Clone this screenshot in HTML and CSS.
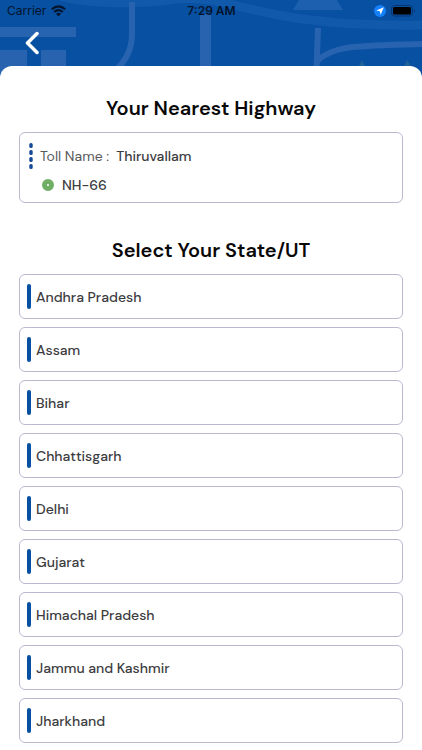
FILE: index.html
```html
<!DOCTYPE html>
<html lang="en">
<head>
<meta charset="utf-8">
<meta name="viewport" content="width=device-width, initial-scale=1">
<title>Select Your State/UT</title>
<link rel="stylesheet" href="styles.css">
</head>
<body>
<header class="header">
  <svg class="map" viewBox="0 0 422 82" preserveAspectRatio="xMidYMin slice" aria-hidden="true">
    <path d="M60 -4C90 5 145 4 176 -1C235 -6 260 28 422 25" fill="none" stroke="#1159aa" stroke-width="9"/>
    <path d="M299 0h38l6 10h-50z" fill="#1c60af"/>
    <g fill="#2863b0">
      <path d="M0 27h76v10H0zM0 50h27v32H0zM41 50h25v32H41zM200 14h11v68h-11z"/>
    </g>
    <path d="M132 2V34Q132 55 116 70M318 28L316 82M317 61C334 45 356 46 422 44" fill="none" stroke="#2863b0" stroke-width="6"/>
    <path d="M359 66l3-6 3 6zM404 66l3-6 4 6z" fill="#1d629b"/>
  </svg>
  <div class="status">
    <div class="status-left">
      <span>Carrier</span>
      <svg width="15" height="12" viewBox="0 0 15 12" aria-hidden="true">
        <path d="M.8 4.300Q7.500-1.700 14.200 4.300M3.200 7Q7.500 3.200 11.800 7" fill="none" stroke="#03142c" stroke-width="2.200"/>
        <path d="M5 8.800Q7.500 6.800 10 8.800L7.500 11.500z" fill="#03142c"/>
      </svg>
    </div>
    <time class="clock">7:29 AM</time>
    <div class="status-right">
      <svg width="12" height="12" viewBox="0 0 12 12" aria-hidden="true">
        <circle cx="6" cy="6" r="6" fill="#1580fb"/>
        <path d="M9.800 2.300L6.700 9.800 5.800 6.300 2.200 5.500z" fill="#fff"/>
      </svg>
      <svg width="25" height="12" viewBox="0 0 25 12" aria-hidden="true">
        <rect x=".5" y=".5" width="21" height="10.500" rx="3" fill="none" stroke="#07356f"/>
        <rect x="2" y="2" width="18" height="7.500" rx="1.500" fill="#000"/>
        <path d="M23 4q2 1.700 0 3.500z" fill="#07356f"/>
      </svg>
    </div>
  </div>
  <button class="back" type="button" aria-label="Back">
    <svg width="14" height="24" viewBox="0 0 14 24" aria-hidden="true">
      <path d="M12 2.500L2.500 12 12 21.500" fill="none" stroke="#fff" stroke-width="3.500" stroke-linecap="round" stroke-linejoin="round"/>
    </svg>
  </button>
</header>
<main class="sheet">
  <h1 class="title">Your Nearest Highway</h1>
  <section class="card toll">
    <div class="toll-name">
      <svg width="4" height="28" viewBox="0 0 4 28" aria-hidden="true">
        <g fill="#174a96"><rect x=".3" y="1" width="3.400" height="5" rx="1.500"/><rect x=".3" y="8" width="3.400" height="5" rx="1.500"/><rect x=".3" y="15" width="3.400" height="5" rx="1.500"/><rect x=".3" y="22" width="3.400" height="5" rx="1.500"/></g>
      </svg>
      <span class="label">Toll Name :</span>
      <strong class="value">Thiruvallam</strong>
    </div>
    <div class="road"><span class="dot"></span><span>NH-66</span></div>
  </section>
  <h2 class="title">Select Your State/UT</h2>
  <nav class="states" aria-label="States">
    <button class="card state" type="button">Andhra Pradesh</button>
    <button class="card state" type="button">Assam</button>
    <button class="card state" type="button">Bihar</button>
    <button class="card state" type="button">Chhattisgarh</button>
    <button class="card state" type="button">Delhi</button>
    <button class="card state" type="button">Gujarat</button>
    <button class="card state" type="button">Himachal Pradesh</button>
    <button class="card state" type="button">Jammu and Kashmir</button>
    <button class="card state" type="button">Jharkhand</button>
  </nav>
</main>
</body>
</html>
```
FILE: styles.css
```css
* {
  box-sizing: border-box;
}

body {
  margin: 0;
  background: #fff;
  color: #3d3d3f;
  font-family: "DM Sans", Inter, sans-serif;
  font-size: 14px;
  font-optical-sizing: none;
  line-height: 20px;
}

.header {
  position: relative;
  height: 82px;
  background: #0850a1;
  overflow: hidden;
}

.map {
  position: absolute;
  inset: 0;
  width: 100%;
  height: 100%;
}

.status {
  position: relative;
  display: grid;
  grid-template-columns: 1fr auto 1fr;
  align-items: center;
  height: 22px;
  padding: 0 6px 0 7px;
  color: #03142c;
  font-family: Inter, sans-serif;
  font-size: 12px;
}

.status-left,
.status-right {
  display: flex;
  align-items: center;
  gap: 5px;
}

.status-right {
  justify-content: flex-end;
}

.clock {
  font-weight: 600;
}

.back {
  position: relative;
  display: flex;
  align-items: center;
  justify-content: center;
  width: 32px;
  height: 42px;
  margin-left: 16px;
  padding: 0;
  border: 0;
  background: none;
}

.sheet {
  position: relative;
  margin-top: -16px;
  padding: 28px 19px 7px;
  border-radius: 12px 12px 0 0;
  background: #fff;
}

.title {
  margin: 0 0 10px;
  color: #080808;
  font-size: 20px;
  font-weight: 600;
  line-height: 28px;
  text-align: center;
}

.card {
  border: 1px solid #b9b9d0;
  border-radius: 6px;
  background: #fff;
}

.toll {
  margin-bottom: 33px;
  padding: 8px 9px 7px;
}

.toll-name {
  display: flex;
  align-items: center;
  gap: 7px;
  height: 30px;
}

.label {
  color: #59595b;
}

.value {
  font-weight: 500;
}

.road {
  display: flex;
  align-items: center;
  gap: 8px;
  height: 24px;
  padding: 4px 0 0 13px;
  font-weight: 500;
}

.dot {
  width: 12px;
  height: 12px;
  border: 5px solid #70ae66;
  border-radius: 50%;
  background: #fff;
}

.states {
  display: grid;
  gap: 8px;
}

.state {
  display: flex;
  align-items: center;
  gap: 5px;
  height: 45px;
  padding: 0 7px;
  color: #3d3d3f;
  font: inherit;
  font-weight: 500;
  text-align: left;
}

.state::before {
  content: "";
  width: 4px;
  height: 25px;
  border-radius: 2px;
  background: #0850a1;
}
```
